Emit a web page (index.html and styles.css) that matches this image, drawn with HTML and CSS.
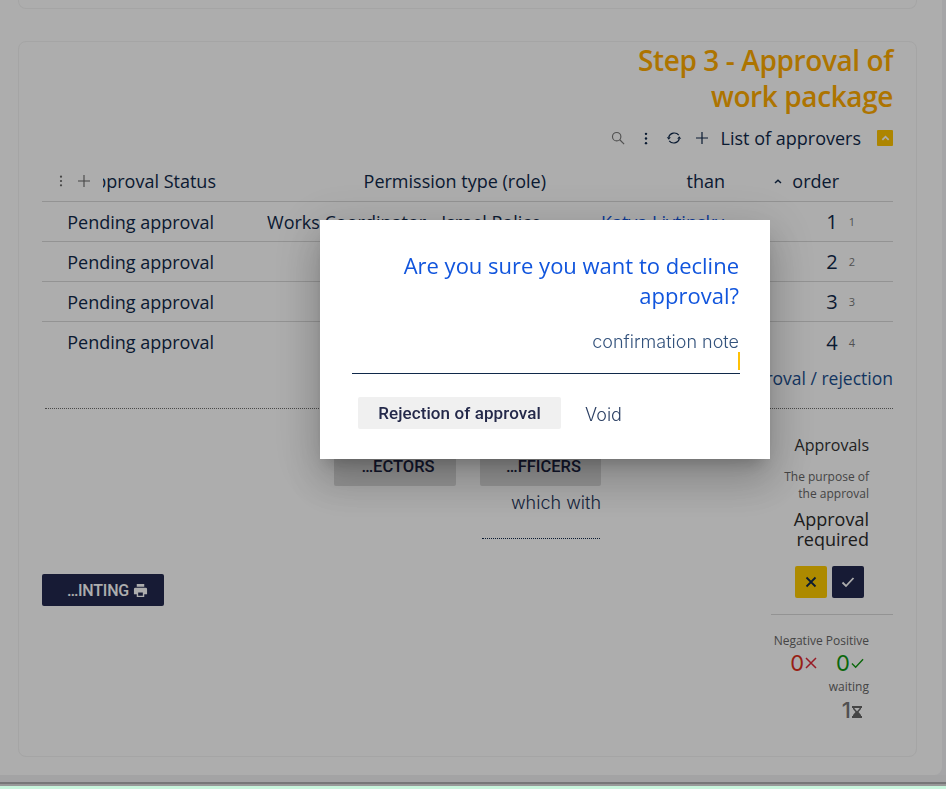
FILE: index.html
```html
<!DOCTYPE html>
<html lang="en">
<head>
<meta charset="utf-8">
<title>Step 3 - Approval of work package</title>
<link rel="stylesheet" href="styles.css">
</head>
<body>
<div class="viewport">
  <main class="panel">
    <section class="card card-top"></section>
    <section class="card card-main">
      <h2 class="step-title">Step 3 - Approval of<br>work package</h2>

      <div class="toolbar">
        <svg class="ic ic-search" viewBox="0 0 16 16"><circle cx="6.500" cy="6.500" r="4.800"/><path d="M10 10l5 5"/></svg>
        <svg class="ic ic-dots" viewBox="0 0 4 14"><circle cx="2" cy="2" r="1.300"/><circle cx="2" cy="7" r="1.300"/><circle cx="2" cy="12" r="1.300"/></svg>
        <svg class="ic ic-sync" viewBox="0 0 16 16"><path d="M12.800 5.200A5.800 5.800 0 0 0 2.700 7.200M3.200 10.800A5.800 5.800 0 0 0 13.300 8.800"/><path class="solid" d="M.8 7.200h4L2.800 9.800zM11.200 8.800h4L13.200 6.200z"/></svg>
        <svg class="ic ic-plus" viewBox="0 0 12 12"><path d="M6 0v12M0 6h12"/></svg>
        <span class="toolbar-label">List of approvers</span>
        <button class="mini-toggle"><svg viewBox="0 0 10 6"><path d="M1.500 5 5 1.500 8.500 5"/></svg></button>
      </div>

      <div class="table">
        <div class="row row-head">
          <div class="cell cell-status">
            <span class="head-tools">
              <svg class="ic ic-dots-faint" viewBox="0 0 4 14"><circle cx="2" cy="2" r="1.300"/><circle cx="2" cy="7" r="1.300"/><circle cx="2" cy="12" r="1.300"/></svg>
              <svg class="ic ic-plus-faint" viewBox="0 0 12 12"><path d="M6 0v12M0 6h12"/></svg>
            </span>
            <span class="clip"><span>Approval Status</span></span>
          </div>
          <div class="cell cell-role">Permission type (role)</div>
          <div class="cell cell-than">than</div>
          <div class="cell cell-order">
            <svg class="sort-caret" viewBox="0 0 8 5"><path d="M1 4 4 1.300 7 4"/></svg>
            <span>order</span>
          </div>
        </div>
        <div class="row">
          <div class="cell cell-status">Pending approval</div>
          <div class="cell cell-role">Works Coordinator - Israel Police</div>
          <div class="cell cell-than link">Katya Livtinsky</div>
          <div class="cell cell-order"><span class="num">1</span><small>1</small></div>
        </div>
        <div class="row">
          <div class="cell cell-status">Pending approval</div>
          <div class="cell cell-role"></div>
          <div class="cell cell-than"></div>
          <div class="cell cell-order"><span class="num">2</span><small>2</small></div>
        </div>
        <div class="row">
          <div class="cell cell-status">Pending approval</div>
          <div class="cell cell-role"></div>
          <div class="cell cell-than"></div>
          <div class="cell cell-order"><span class="num">3</span><small>3</small></div>
        </div>
        <div class="row row-last">
          <div class="cell cell-status">Pending approval</div>
          <div class="cell cell-role"></div>
          <div class="cell cell-than"></div>
          <div class="cell cell-order"><span class="num">4</span><small>4</small></div>
        </div>
      </div>

      <div class="reasons">Reasons for approval / rejection</div>

      <div class="lower">
        <div class="lower-left">
          <button class="print-btn"><span>…INTING</span>
            <svg viewBox="0 0 16 16"><path d="M4 1h8v3H4zM2.500 5h11A1.500 1.500 0 0 1 15 6.500V12h-3v3H4v-3H1V6.500A1.500 1.500 0 0 1 2.500 5zM5.500 10v3.500h5V10z" fill-rule="evenodd"/></svg>
          </button>
        </div>
        <div class="lower-mid">
          <div class="mid-buttons">
            <button class="grey-btn">…ECTORS</button>
            <button class="grey-btn">…FFICERS</button>
          </div>
          <div class="which">which with</div>
          <div class="which-line"></div>
        </div>
        <aside class="lower-right">
          <div class="r-title">Approvals</div>
          <div class="r-small r-purpose">The purpose of<br>the approval</div>
          <div class="r-req">Approval<br>required</div>
          <div class="r-actions">
            <button class="act act-no"><svg viewBox="0 0 12 12"><path d="M1.500 1.500l9 9M10.500 1.500l-9 9"/></svg></button>
            <button class="act act-yes"><svg viewBox="0 0 14 12"><path d="M1.500 6.500 5 10l7.500-8"/></svg></button>
          </div>
          <div class="r-divider"></div>
          <div class="r-small r-counts-head">Negative Positive</div>
          <div class="r-counts">
            <span class="count neg">0<svg viewBox="0 0 12 12"><path d="M1 1l10 10M11 1 1 11"/></svg></span>
            <span class="count pos">0<svg viewBox="0 0 14 12"><path d="M1 6.500 5 10.500 13 2"/></svg></span>
          </div>
          <div class="r-small r-waiting">waiting</div>
          <div class="count wait">1<svg viewBox="0 0 10 12"><path fill-rule="evenodd" d="M0 0h10v2H9v1L6.500 6 9 9v1h1v2H0v-2h1V9l2.500-3L1 3V2H0zM2.500 2v.6L5 5.200l2.500-2.600V2z"/></svg></div>
        </aside>
      </div>
    </section>
  </main>
  <div class="footer-strip"></div>
</div>

<div class="overlay"></div>
<div class="modal-layer">
  <div class="modal">
    <h3 class="modal-title">Are you sure you want to decline approval?</h3>
    <label class="field">
      <span class="field-label">confirmation note</span>
      <span class="field-input"><span class="caret"></span></span>
    </label>
    <div class="modal-actions">
      <button class="btn-reject">Rejection of approval</button>
      <button class="btn-void">Void</button>
    </div>
  </div>
</div>
</body>
</html>
```
FILE: styles.css
```css
* { box-sizing: border-box; }
html, body { margin: 0; height: 100%; overflow: hidden; }
body { background: #f4f4f6; font-family: "Open Sans", sans-serif; color: #10294a; }
button { font: inherit; border: 0; padding: 0; cursor: pointer; }

.viewport { height: 789px; display: flex; flex-direction: column; overflow: hidden; }
.panel {
  height: 775px; flex: none; width: 942px; background: #fff;
  border-bottom-right-radius: 8px; padding-left: 18px;
  display: flex; flex-direction: column; gap: 32px; overflow: hidden;
}
.card { width: 899px; border: 1px solid #f3f3f3; border-radius: 8px; flex: none; }
.card-top { height: 9px; border-top: 0; border-top-left-radius: 0; border-top-right-radius: 0; }
.card-main { height: 716px; padding: 0 23px; }

.step-title {
  margin: 0; text-align: right; font-size: 28px; line-height: 36px;
  font-weight: 600; color: #ffac00; letter-spacing: -.4px;
}

.toolbar { margin-top: 5px; height: 38px; display: flex; align-items: center; justify-content: flex-end; }
.ic { display: block; fill: none; stroke: currentColor; }
.ic-search { width: 14px; height: 14px; color: #777; stroke-width: 1.300; margin-right: 19px; }
.ic-dots { width: 4px; height: 13px; fill: #10294a; stroke: none; margin-right: 18px; }
.ic-sync { width: 16px; height: 16px; stroke-width: 1.200; color: #10294a; margin-right: 14px; }
.ic-sync .solid { fill: currentColor; stroke: none; }
.ic-plus { width: 12px; height: 12px; stroke-width: 1.200; color: #10294a; margin-right: 13px; }
.toolbar-label { font-size: 18px; color: #10294a; margin-right: 16px; }
.mini-toggle { width: 16px; height: 16px; background: #ffc400; border-radius: 1px; display: flex; align-items: center; justify-content: center; }
.mini-toggle svg { width: 9px; height: 6px; fill: none; stroke: #fff; stroke-width: 2; }

.table { margin-top: 4px; }
.row { display: grid; grid-template-columns: 180px 330px 181px 160px; height: 40px; border-bottom: 1px solid #d9d9d9; align-items: center; font-size: 18px; }
.row-head { height: 41px; }
.row-last { border-bottom: 0; }
.cell { text-align: right; white-space: nowrap; display: flex; justify-content: flex-end; align-items: center; min-width: 0; }
.row .cell-status { padding-right: 8px; }
.row .cell-role { padding-right: 11px; }
.row .cell-than { padding-right: 9px; }
.row .cell-order { padding-right: 32px; }
.row-head .cell-status { padding-right: 6px; }
.row-head .cell-role { padding-right: 6px; }
.row-head .cell-than { padding-right: 8px; }
.row-head .cell-order { padding-right: 54px; }
.head-tools { display: flex; align-items: center; gap: 15px; padding-left: 17px; flex: none; margin-right: 13px; }
.ic-dots-faint { width: 4px; height: 12px; fill: #666; stroke: none; }
.ic-plus-faint { width: 12px; height: 12px; color: #666; stroke-width: 1.100; }
.clip { flex: 1; min-width: 0; overflow: hidden; display: flex; justify-content: flex-end; }
.clip span { flex: none; }
.link { color: #1155dd; }
.sort-caret { width: 8px; height: 5px; fill: none; stroke: #10294a; stroke-width: 1.500; margin-right: 10px; }
.num { font-size: 20px; width: 14px; text-align: center; }
small { font-size: 11px; color: #777; width: 18px; text-align: center; margin-left: 4px; }

.reasons { margin-top: 3px; height: 27px; text-align: right; font-size: 17.500px; color: #1b4f8f; line-height: 27px; white-space: nowrap; }
.lower { margin-top: 16px; border-top: 1px dotted #6c6c6c; margin-left: 3px; display: flex; height: 330px; }
.lower-left { width: 289px; margin-left: -3px; padding-top: 165px; flex: none; }
.print-btn {
  width: 122px; height: 32px; background: #22294f; color: #fff; border-radius: 2px;
  font-family: Roboto, sans-serif; font-weight: 500; font-size: 16px;
  display: flex; align-items: center; justify-content: flex-end; gap: 4px; padding-right: 16px; letter-spacing: -.2px;
}
.print-btn svg { width: 15px; height: 15px; fill: currentColor; }

.lower-mid { width: 270px; flex: none; display: flex; flex-direction: column; align-items: flex-end; }
.mid-buttons { margin-top: 37px; display: flex; gap: 24px; }
.grey-btn { width: 122px; height: 40px; background: #dcdcdc; color: #1a2140; border-radius: 2px; font-family: Roboto, sans-serif; font-weight: 500; font-size: 16.500px; padding-left: 6px; display: flex; align-items: flex-end; justify-content: center; padding-bottom: 10px; }
.grey-btn + .grey-btn { width: 121px; }
.which { margin-top: 5px; font-family: Inter, sans-serif; font-weight: 300; font-size: 18px; line-height: 24px; color: #24345a; }
.which-line { margin-top: 23px; width: 118px; border-top: 1px dotted #10294a; margin-right: 1px; }

.lower-right { margin-left: auto; width: 122px; padding-right: 24px; padding-top: 26px; text-align: right; display: flex; flex-direction: column; align-items: flex-end; flex: none; }
.r-title { font-size: 16px; line-height: 20px; color: #333; white-space: nowrap; }
.r-small { font-size: 12px; line-height: 17px; color: #666; white-space: nowrap; }
.r-purpose { margin-top: 13px; }
.r-req { margin-top: 7px; font-size: 18px; line-height: 20px; color: #2c2c2c; }
.r-actions { margin-top: 17px; display: flex; gap: 5px; margin-right: 5px; }
.act { width: 32px; height: 32px; border-radius: 2px; display: flex; align-items: center; justify-content: center; }
.act svg { width: 12px; height: 12px; fill: none; stroke-width: 1.800; }
.act-no { background: #ffcc00; }
.act-no svg { stroke: #10294a; }
.act-yes { background: #22294f; }
.act-yes svg { stroke: #fff; width: 14px; }
.r-divider { width: 122px; margin-right: -24px; margin-top: 16px; border-top: 1px solid #d9d9d9; }
.r-counts-head { margin-top: 17px; }
.r-counts { display: flex; gap: 19px; margin-right: 5px; }
.count { display: inline-flex; align-items: center; gap: 1px; font-size: 22px; line-height: 28px; white-space: nowrap; font-family: Inter, sans-serif; font-weight: 400; }
.count svg { fill: none; stroke: currentColor; stroke-width: 1.500; }
.neg { color: #e03020; }
.neg svg { width: 12px; height: 12px; stroke: #e0283a; }
.pos { color: #119911; }
.pos svg { width: 13px; height: 12px; }
.r-waiting { margin-top: 1px; }
.wait { color: #777; line-height: 26px; margin-top: 2px; margin-right: 7px; font-weight: 500; }
.wait svg { width: 10px; height: 12px; fill: #666; stroke: none; margin-top: 3px; }

.footer-strip { flex: 1; background: linear-gradient(#f0f0f2 0 7px, #b0b0b2 7px 9px, #e0e0e0 9px 11px, #c8f5dc 11px); }

.overlay { position: fixed; inset: 0 0 3px 0; background: rgba(0,0,0,.32); }
.modal-layer { position: fixed; inset: 0; padding: 220px 176px 0 320px; }
.modal {
  width: 450px; height: 239px; background: #fff; padding: 30px 30px 0 32px;
  box-shadow: 0 11px 15px -7px rgba(0,0,0,.2), 0 24px 38px 3px rgba(0,0,0,.14), 0 9px 46px 8px rgba(0,0,0,.12);
}
.modal-title { margin: 0; padding-left: 40px; padding-right: 1px; text-align: right; font-size: 22px; line-height: 30px; font-weight: 400; color: #1155dd; }
.field { display: block; margin-top: 20px; }
.field-label { display: block; text-align: right; padding-right: 1px; font-family: Inter, sans-serif; font-weight: 300; font-size: 18px; line-height: 24px; color: #33527c; }
.field-input { display: block; position: relative; margin-top: -2px; border-bottom: 1px solid #10294a; height: 22px; }
.caret { position: absolute; right: 0; top: 0; width: 2px; height: 18px; background: #ffc107; }
.modal-actions { margin-top: 23px; padding-left: 6px; display: flex; align-items: center; gap: 24px; }
.btn-reject { width: 203px; height: 32px; background: #f0f0f0; color: #24294a; border-radius: 2px; font-family: Roboto, sans-serif; font-weight: 500; font-size: 17px; letter-spacing: .1px; }
.btn-void { background: none; font-family: Inter, sans-serif; font-weight: 300; font-size: 18px; color: #2b3f63; margin-top: 3px; }
```
